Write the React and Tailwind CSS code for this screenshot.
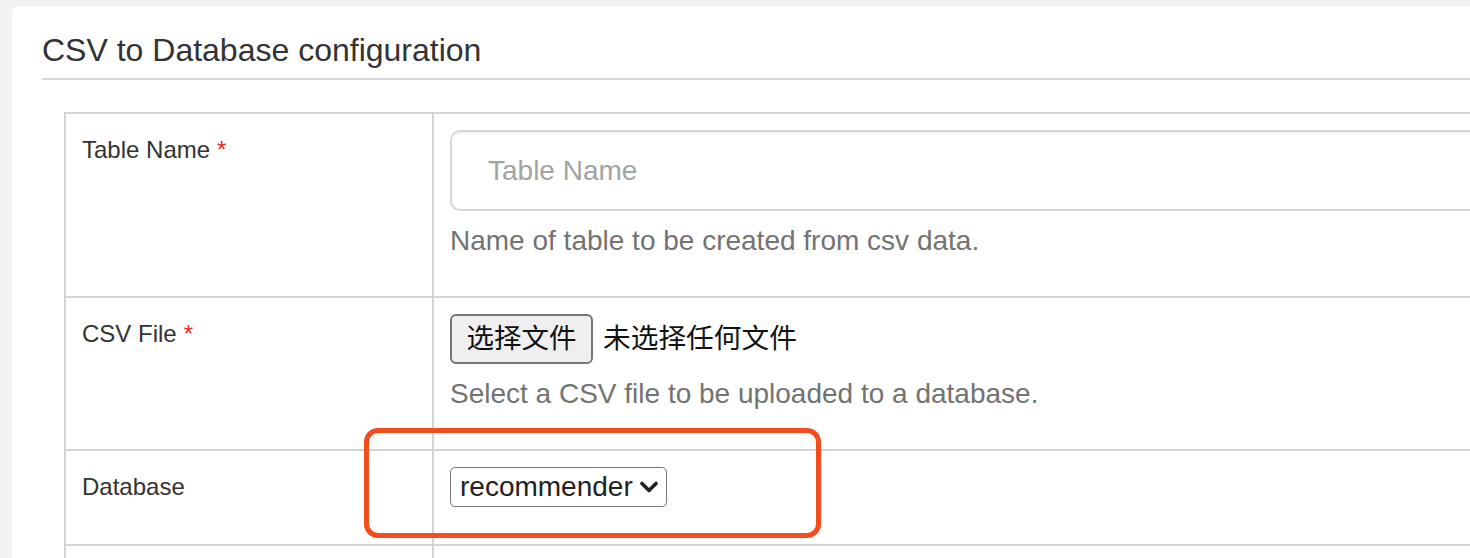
const font = "font-['Liberation_Sans','Noto_Sans_CJK_SC',sans-serif]"

const Label = ({ children, required }) => (
  <div className="w-[368px] shrink-0 border-r-2 border-[#cfd4d8] px-4 pt-[19px] pb-4 text-[24px] leading-[34px] text-[#333]">
    {children}
    {required && <span className="ml-[7px] text-[#ee2a1e]">*</span>}
  </div>
)

const Row = ({ children }) => (
  <div className="flex border-b-2 border-[#cfd4d8]">{children}</div>
)

const Help = ({ children }) => (
  <p className="mt-[10px] mb-[19px] text-[28px] leading-[40px] text-[#737373]">{children}</p>
)

export default function App() {
  return (
    <div className={`relative h-[558px] w-[1470px] overflow-hidden bg-[#f2f2f2] pl-[12px] pt-[6px] ${font}`}>
      <div className="w-[1520px] rounded-tl-[8px] bg-white pl-[30px] pt-[27px] pb-10">
        {/* Header */}
        <h3 className="border-b-2 border-[#d3d7db] pb-[10px] text-[32px] leading-[35px] font-normal text-[#333]">
          CSV to Database configuration
        </h3>

        {/* Form table */}
        <div className="mt-[32px] ml-[22px] border-l-2 border-t-2 border-[#cfd4d8]">
          <Row>
            <Label required>Table Name</Label>
            <div className="flex-1 p-4">
              <input
                placeholder="Table Name"
                className="h-[81px] w-full rounded-[10px] border-2 border-[#d6d6d6] pl-[36px] text-[28px] text-[#555] shadow-[inset_0_2px_2px_rgba(0,0,0,0.06)] outline-none placeholder:text-[#a3a3a3]"
              />
              <Help>Name of table to be created from csv data.</Help>
            </div>
          </Row>

          <Row>
            <Label required>CSV File</Label>
            <div className="flex-1 p-4">
              <div className="flex items-center">
                <button className="h-[50px] w-[143px] rounded-[6px] border-2 border-[#767676] bg-[#efefef] text-[27.5px] leading-none text-[#111]">
                  选择文件
                </button>
                <span className="ml-[10px] text-[27.7px] text-[#111]">未选择任何文件</span>
              </div>
              <Help>Select a CSV file to be uploaded to a database.</Help>
            </div>
          </Row>

          <Row>
            <Label>Database</Label>
            <div className="flex-1 p-4">
              <div className="mb-[21px] flex h-[40px] w-[217px] items-center justify-between rounded-[5px] border-[1.5px] border-[#767676] pl-[9px] pr-[8px] text-[28px] text-[#222]">
                <span>recommender</span>
                <svg width="18" height="12" viewBox="0 0 18 12" fill="none">
                  <path d="M2 2.5l7 7 7-7" stroke="#222" strokeWidth="3.6" strokeLinecap="round" strokeLinejoin="round" />
                </svg>
              </div>
            </div>
          </Row>

          <Row>
            <Label />
            <div className="h-[120px] flex-1" />
          </Row>
        </div>
      </div>

      {/* Annotation */}
      <div className="absolute left-[364px] top-[428px] h-[110px] w-[457px] rounded-[14px] border-[5px] border-[#f24c1f]" />
    </div>
  )
}
